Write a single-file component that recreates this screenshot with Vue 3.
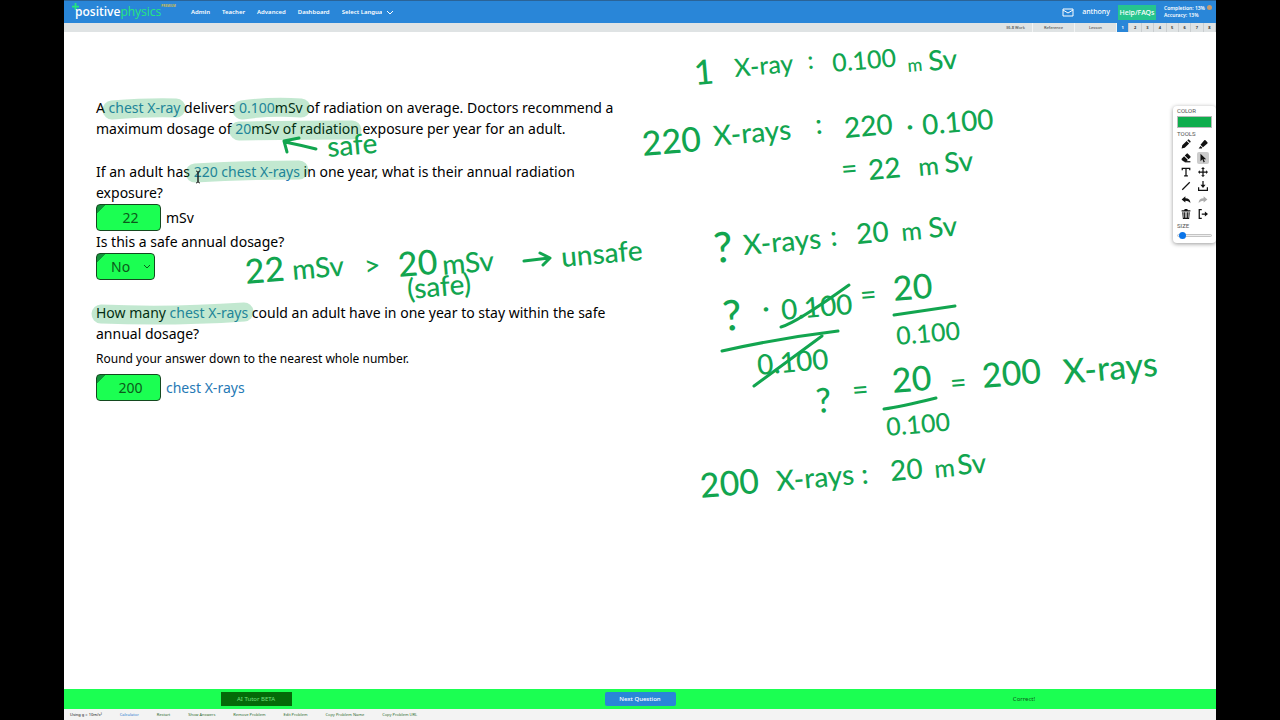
<template>
  <div class="stage">
    <header class="topbar">
      <a class="logo" href="#" aria-label="positivephysics premium">
        <svg class="plus" viewBox="0 0 8 8" aria-hidden="true"><path d="M4 0v8M0 4h8" /></svg>
        <span>positive<b>physics</b></span>
        <sup>PREMIUM</sup>
      </a>
      <nav class="main-nav" aria-label="Main">
        <a v-for="n in nav" :key="n" href="#">{{ n }}</a>
        <span class="lang-wrap">
          <select class="lang" aria-label="Language">
            <option>Select Language</option>
          </select>
          <svg viewBox="0 0 8 5" aria-hidden="true"><path d="M1 1l3 3 3-3" /></svg>
        </span>
      </nav>
      <div class="account">
        <a class="mail" href="#" aria-label="Messages">
          <svg viewBox="0 0 12 9"><path d="M1 1h10v7H1zM1 2l5 3 5-3" /></svg>
        </a>
        <a class="user" href="#">anthony</a>
        <button class="help" type="button">Help/FAQs</button>
        <div class="stats">
          <div>Completion: 13%</div>
          <div>Accuracy: 13%</div>
        </div>
        <i class="status"></i>
      </div>
    </header>

    <nav class="subbar" aria-label="Problems">
      <a v-for="t in tabs" :key="t" class="tab" href="#">{{ t }}</a>
      <div class="nums">
        <a v-for="n in 8" :key="n" :class="['num', { active: n === 1 }]" href="#">{{ n }}</a>
      </div>
    </nav>

    <main class="board">
      <section class="problem">
        <p>
          A <em>chest X-ray</em> delivers <em>0.100</em>mSv of radiation on average. Doctors recommend a
          maximum dosage of <em>20</em>mSv of radiation exposure per year for an adult.
        </p>
        <p class="spaced">
          If an adult has <em>220 chest X-rays</em> in one year, what is their annual radiation exposure?
        </p>
        <div class="answer">
          <input id="exposure" v-model="exposure" class="field" type="text" />
          <label for="exposure">mSv</label>
        </div>
        <label class="question" for="safe">Is this a safe annual dosage?</label>
        <div class="answer">
          <span class="choice-wrap">
            <select id="safe" v-model="safe" class="field choice">
              <option>Yes</option>
              <option>No</option>
            </select>
            <svg viewBox="0 0 8 5" aria-hidden="true"><path d="M1 1l3 3 3-3" /></svg>
          </span>
        </div>
        <p class="spaced">
          How many <em>chest X-rays</em> could an adult have in one year to stay within the safe annual dosage?
        </p>
        <p class="hint">Round your answer down to the nearest whole number.</p>
        <div class="answer">
          <input id="count" v-model="count" class="field" type="text" />
          <label for="count"><em>chest X-rays</em></label>
        </div>
      </section>
    </main>

    <!-- drawing layer -->
    <svg class="ink">
      <g transform="translate(-64 0)">
        <g class="marker">
          <path v-for="m in marks" :key="m" :d="m" />
        </g>
        <g class="pen">
          <path v-for="s in strokes" :key="s" :d="s" />
        </g>
        <text
          v-for="(w, i) in words"
          :key="i"
          :class="w[3]"
          :transform="`translate(${w[0]} ${w[1]}) rotate(-5)`"
        >{{ w[2] }}</text>
        <path class="ibeam" d="M196 171q2 0 2 2v8q0 2-2 2M200 171q-2 0-2 2v8q0 2 2 2" />
      </g>
    </svg>

    <aside class="palette">
      <label for="ink-color">COLOR</label>
      <button id="ink-color" class="swatch" type="button" aria-label="Color"></button>
      <span>TOOLS</span>
      <div class="tools">
        <button
          v-for="t in tools"
          :key="t.name"
          :class="['tool', { active: t.name === 'Select', off: t.name === 'Redo' }]"
          :aria-label="t.name"
          type="button"
        >
          <svg viewBox="0 0 16 16">
            <path v-if="t.fill" class="solid" :d="t.fill" />
            <path v-if="t.line" class="line" :d="t.line" />
          </svg>
        </button>
      </div>
      <label for="size">SIZE</label>
      <input id="size" v-model="size" type="range" min="0" max="100" />
    </aside>

    <div class="resultbar">
      <div><button class="tutor" type="button">AI Tutor BETA</button></div>
      <div><button class="next" type="button">Next Question</button></div>
      <div class="correct">Correct!</div>
    </div>

    <footer class="footer">
      <span>Using g = 10m/s²</span>
      <a class="calc" href="#">Calculator</a>
      <a v-for="l in links" :key="l" href="#">{{ l }}</a>
    </footer>
  </div>
</template>

<script setup>
import { ref } from 'vue'

const exposure = ref('22')
const safe = ref('No')
const count = ref('200')
const size = ref(5)

const nav = ['Admin', 'Teacher', 'Advanced', 'Dashboard']
const tabs = ['36.8 Work', 'Reference', 'Lesson']
const links = ['Restart', 'Show Answers', 'Remove Problem', 'Edit Problem', 'Copy Problem Name', 'Copy Problem URL']

const tools = [
  { name: 'Pencil', fill: 'M1 15l1-5 7-7 4 4-7 7zM10 2l1-1q1-1 2 0l2 2q1 1 0 2l-1 1z' },
  { name: 'Highlighter', fill: 'M1 15l3-4 3 3-1 1zM4 9l6-7q1-1 2 0l3 3q1 1 0 2l-7 6z' },
  { name: 'Eraser', fill: 'M1 9l4-4 6 6-3 3H5l-4-3zM6 4l3-3q1-1 2 0l4 4q1 1 0 2l-3 3z', line: 'M6 14h9' },
  { name: 'Select', fill: 'M4 1v12l3-3 2 5 2-1-2-4h4z' },
  { name: 'Text', line: 'M2 5V2h12v3M8 2v12M5 14h6' },
  { name: 'Move', fill: 'M8 0l3 3H5zM8 16l3-3H5zM0 8l3-3v6zM16 8l-3-3v6z', line: 'M8 2v12M2 8h12' },
  { name: 'Line', line: 'M2 14L14 2' },
  { name: 'Download', fill: 'M4 6h8l-4 5z', line: 'M8 0v8M1 10v5h14v-5' },
  { name: 'Undo', fill: 'M1 7l6-5v3q8 0 8 8-2-4-8-4v3z' },
  { name: 'Redo', fill: 'M15 7L9 2v3q-8 0-8 8 2-4 8-4v3z' },
  { name: 'Trash', fill: 'M1 2h4l1-2h4l1 2h4v2H1zM2 5h2v9h1V5h2v9h2V5h2v9h1V5h2l-1 11H3z' },
  { name: 'Exit', fill: 'M11 4l5 4-5 4z', line: 'M6 1H2v14h4M6 8h7' },
]

const marks = [
  'M112 110Q150 107 176 108',
  'M242 110Q270 106 301 108',
  'M239 131Q300 130 352 130',
  'M195 173Q240 170 299 170',
  'M101 314Q170 317 244 312',
]

const strokes = [
  'M316 149Q300 145 285 142M299 138L284 141L287 152',
  'M524 261L549 258M540 253L550 258L543 265',
  'M722 351Q780 338 838 331',
  'M781 327Q796 323 849 285',
  'M754 386L822 336',
  'M894 315L955 306',
  'M884 409Q900 407 936 398',
]

// x, baseline, text, size class
const words = [
  [695, 85, '1', 'xl'], [735, 77, 'X-ray', 'md'], [808, 69, ':', 'md'],
  [833, 72, '0.100', 'md'], [908, 72, 'm', 'sm'], [929, 71, 'Sv', 'lg'],
  [643, 156, '220', 'xl'], [714, 146, 'X-rays', 'lg'], [816, 134, ':', 'lg'],
  [845, 138, '220', 'lg'], [907, 136, '·', 'lg'], [923, 135, '0.100', 'lg'],
  [842, 179, '=', 'lg'], [869, 180, '22', 'lg'], [919, 176, 'm', 'md'], [945, 173, 'Sv', 'lg'],
  [715, 263, '?', 'xxl'], [744, 255, 'X-rays', 'lg'], [831, 246, ':', 'lg'],
  [857, 244, '20', 'lg'], [902, 241, 'm', 'md'], [929, 238, 'Sv', 'lg'],
  [724, 331, '?', 'xxl'], [763, 318, '·', 'lg'], [782, 320, '0.100', 'lg'],
  [861, 305, '=', 'lg'], [894, 301, '20', 'xl'], [897, 345, '0.100', 'md'],
  [758, 375, '0.100', 'lg'],
  [817, 413, '?', 'xl'], [853, 400, '=', 'lg'], [893, 393, '20', 'xl'],
  [887, 436, '0.100', 'md'], [951, 393, '=', 'lg'], [983, 388, '200', 'xl'],
  [1064, 384, 'X-rays', 'xl'],
  [701, 498, '200', 'xl'], [777, 491, 'X-rays', 'lg'], [862, 484, ':', 'lg'],
  [891, 481, '20', 'lg'], [935, 478, 'm', 'md'], [958, 475, 'Sv', 'lg'],
  [328, 157, 'safe', 'lg'],
  [246, 284, '22', 'xl'], [293, 280, 'mSv', 'lg'], [365, 276, '>', 'lg'],
  [399, 277, '20', 'xl'], [443, 275, 'mSv', 'lg'], [562, 267, 'unsafe', 'lg'],
  [408, 299, '(safe)', 'lg'],
]
</script>

<style>
body {
  background: #000;
}
</style>

<style scoped>
.stage {
  position: relative;
  display: flex;
  flex-direction: column;
  min-height: 100vh;
  margin: 0 5%;
  background: #fff;
  color: #000;
  font-family: "Noto Sans", sans-serif;
  overflow: hidden;
}

.stage *,
.stage {
  box-sizing: border-box;
}

a {
  color: inherit;
  text-decoration: none;
}

button,
input,
select {
  margin: 0;
  padding: 0;
  border: 0;
  font-family: inherit;
}

svg path {
  fill: none;
}

.topbar {
  display: flex;
  align-items: center;
  height: 23px;
  border-top: 1px solid #2a6397;
  background: #2986d8;
  color: #fff;
  font-size: 6px;
  font-weight: 600;
  line-height: 8px;
}

.logo {
  display: flex;
  width: 127px;
  padding-left: 8px;
  font-family: "Open Sans", sans-serif;
  font-size: 12px;
  font-weight: 600;
  line-height: 20px;
}

.logo b {
  color: #25e77c;
  font-weight: 500;
}

.logo sup {
  color: #d5bf4c;
  font-size: 3px;
  font-weight: 700;
  line-height: 8px;
}

.plus {
  width: 7px;
  height: 7px;
  margin: 1px -4px 0 0;
}

.plus path {
  stroke: #25e77c;
  stroke-width: 2;
}

.main-nav {
  display: flex;
  align-items: center;
  gap: 12px;
}

.lang-wrap {
  display: flex;
  align-items: center;
  gap: 4px;
}

.lang {
  width: 40px;
  appearance: none;
  background: none;
  color: #fff;
  font-size: 6px;
  font-weight: 600;
}

.lang-wrap svg {
  width: 8px;
  height: 5px;
}

.lang-wrap path,
.mail path {
  stroke: #fff;
}

.account {
  display: flex;
  align-items: center;
  gap: 8px;
  margin-left: auto;
  padding-right: 4px;
}

.mail svg {
  display: block;
  width: 12px;
  height: 9px;
}

.help {
  width: 38px;
  height: 15px;
  background: #26c58e;
  color: #fff;
  font-size: 7px;
  font-weight: 500;
}

.user {
  font-size: 7px;
  font-weight: 500;
}

.stats {
  font-size: 5px;
  line-height: 7px;
}

.status {
  width: 5px;
  height: 5px;
  margin: 0 0 9px -6px;
  border-radius: 50%;
  background: #c99b6c;
}

.subbar {
  display: flex;
  justify-content: flex-end;
  height: 9px;
  background: #dfe3e4;
  color: #333;
  font-size: 4px;
  line-height: 9px;
  text-align: center;
}

.tab {
  width: 42px;
  border-right: 1px solid #f2f4f4;
}

.tab:first-child {
  width: 34px;
}

.nums {
  display: grid;
  grid-template-columns: repeat(8, 1fr);
  width: 99px;
}

.num {
  border-right: 1px solid #c9cdcf;
  font-weight: 700;
}

.num.active {
  background: #2986d8;
  color: #fff;
}

.board {
  flex: 1;
  padding: 65px 32px 24px;
}

.problem {
  max-width: 530px;
  font-size: 14px;
  line-height: 21px;
}

.problem p {
  margin: 0;
}

.problem .spaced {
  margin-top: 22px;
}

.problem em {
  color: #2679b5;
  font-style: normal;
}

.answer {
  display: flex;
  align-items: center;
  gap: 5px;
  height: 28px;
}

.question {
  display: block;
}

.problem .hint {
  margin: 4px 0;
  font-size: 12px;
}

.field {
  width: 65px;
  height: 27px;
  border: 1px solid #14491f;
  border-radius: 4px;
  background: linear-gradient(135deg, #12933a 6px, #1bff52 6px);
  color: #0b5a1a;
  font-size: 14px;
  text-align: center;
}

input.field {
  padding-left: 4px;
}

.choice-wrap {
  display: inline-flex;
  align-items: center;
}

.choice {
  width: 59px;
  padding-left: 14px;
  appearance: none;
  text-align: left;
}

.choice-wrap svg {
  width: 8px;
  height: 5px;
  margin-left: -12px;
  pointer-events: none;
}

.choice-wrap path {
  stroke: #0b5a1a;
}

.ink {
  position: absolute;
  inset: 0;
  width: 100%;
  height: 100%;
  pointer-events: none;
}

.marker path {
  stroke: #12a54a;
  stroke-width: 19;
  stroke-linecap: round;
  opacity: 0.26;
}

.pen path {
  stroke: #12a54f;
  stroke-width: 3;
  stroke-linecap: round;
  stroke-linejoin: round;
}

.ink text {
  fill: #12a54f;
  font-family: Lato, sans-serif;
  font-weight: 500;
}

.ink .sm { font-size: 18px; }
.ink .md { font-size: 25px; }
.ink .lg { font-size: 28px; }
.ink .xl { font-size: 34px; }
.ink .xxl { font-size: 42px; }

.ibeam {
  stroke: #222;
}

.palette {
  position: absolute;
  top: 106px;
  right: 0;
  display: flex;
  flex-direction: column;
  width: 43px;
  padding: 2px 4px 4px;
  border-radius: 4px;
  background: #fff;
  box-shadow: 0 1px 4px rgba(0, 0, 0, 0.4);
  color: #555;
  font-family: Roboto, sans-serif;
  font-size: 6px;
  line-height: 6px;
}

.swatch {
  height: 12px;
  margin: 2px 0 3px;
  border: 1px solid #bbb;
  background: #0fad4d;
}

.tools {
  display: grid;
  grid-template-columns: 12px 12px;
  justify-content: center;
  gap: 2px 5px;
  margin: 1px 0 3px;
}

.tool {
  display: grid;
  place-items: center;
  width: 12px;
  height: 12px;
  border-radius: 2px;
  background: none;
}

.tool.active {
  background: #ccc;
}

.tool.off {
  opacity: 0.35;
}

.tool svg {
  width: 10px;
  height: 10px;
}

.tool .solid {
  fill: #111;
}

.tool .line {
  stroke: #111;
  stroke-width: 2;
}

#size {
  width: 100%;
  height: 8px;
  margin-top: 2px;
  appearance: none;
  background: none;
}

#size::-webkit-slider-runnable-track {
  height: 3px;
  border: 1px solid #c4c4c4;
  border-radius: 2px;
  background: #eee;
}

#size::-webkit-slider-thumb {
  width: 7px;
  height: 7px;
  margin-top: -3px;
  appearance: none;
  border-radius: 50%;
  background: #0a74e8;
}

.resultbar {
  display: grid;
  grid-template-columns: 1fr 1fr 1fr;
  align-items: center;
  justify-items: center;
  height: 20px;
  background: #1bff52;
  font-size: 6px;
}

.resultbar button {
  display: block;
  width: 71px;
  height: 14px;
  font-size: 6px;
}

.tutor {
  background: #046a08;
  color: #6fe07c;
}

.next {
  border-radius: 2px;
  background: #2986d8;
  color: #fff;
  font-weight: 500;
}

.correct {
  color: #0b5a1a;
}

.footer {
  display: flex;
  align-items: center;
  gap: 18px;
  height: 11px;
  padding-left: 6px;
  background: #f3f3f3;
  color: #2d6a2d;
  font-size: 4px;
  line-height: 11px;
}

.footer span {
  color: #111;
}

.footer .calc {
  color: #2679d0;
}
</style>
